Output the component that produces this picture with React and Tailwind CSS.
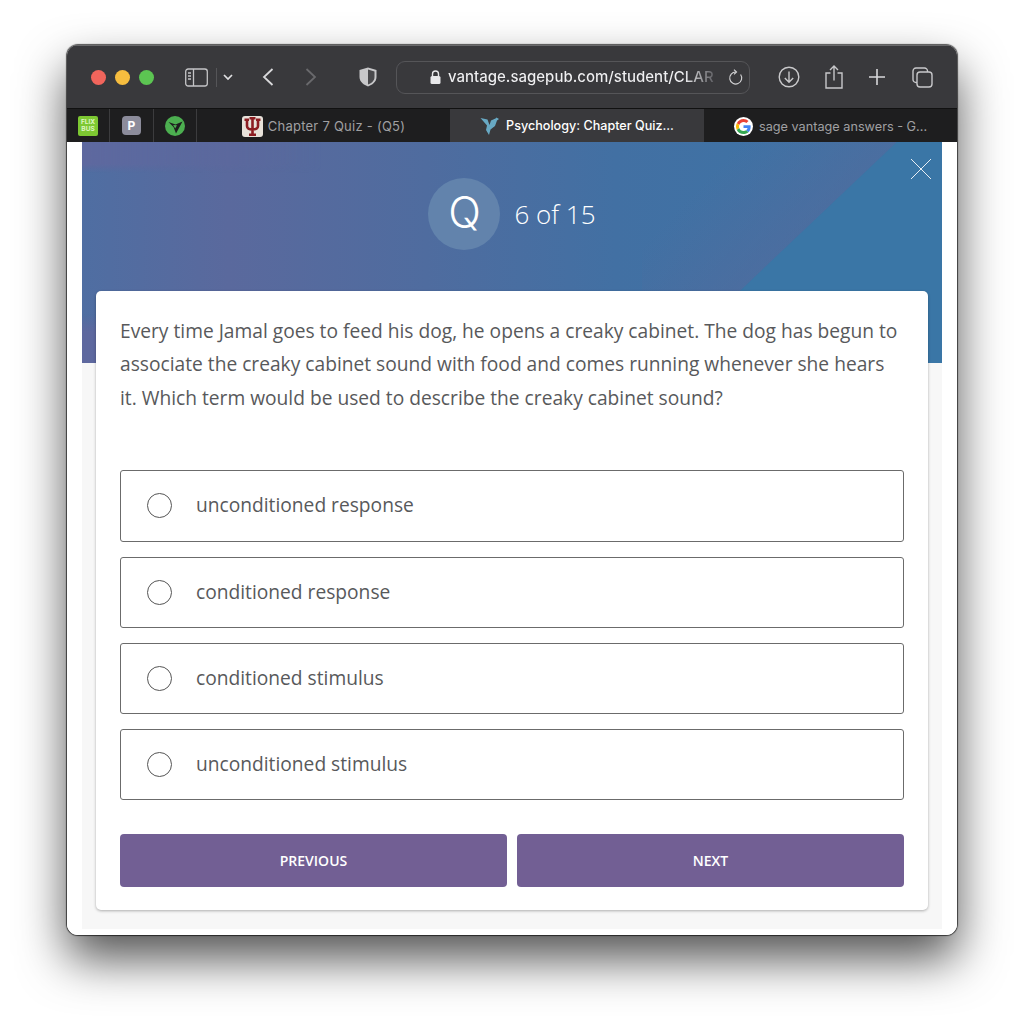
import React from "react";

function Tab({ icon, label, active, className = "", textClass = "" }) {
  return (
    <div className={`flex items-center justify-center gap-[5px] h-full ${active ? "bg-[#39393c] text-white font-medium" : "text-[#a0a0a2] border-l border-[#3c3c3e]"} ${className}`}>
      {icon}
      <span className={`whitespace-nowrap translate-y-[1px] ${textClass}`}>{label}</span>
    </div>
  );
}

function Option({ label }) {
  return (
    <div className="h-[71.3px] flex items-center rounded-[3px] border border-[#6b6b6b] bg-white pl-[26px]">
      <span className="w-[25px] h-[25px] rounded-full border border-[#555] mr-[24px] shrink-0" />
      <span className="text-[19.2px] text-[#58595b]">{label}</span>
    </div>
  );
}

function Header() {
  return (
    <div className="relative h-[221px] flex justify-center pt-[36px] overflow-hidden bg-[#4a6f9f]">
      <svg className="absolute inset-0" width="860" height="221" viewBox="0 0 860 221">
        <defs>
          <linearGradient id="g1" x1="0" y1="0" x2="860" y2="0" gradientUnits="userSpaceOnUse">
            <stop offset="0" stopColor="#4f6ea2" />
            <stop offset="0.17" stopColor="#5a699d" />
            <stop offset="0.4" stopColor="#4f6c9f" />
            <stop offset="0.62" stopColor="#4270a3" />
            <stop offset="1" stopColor="#3c74a6" />
          </linearGradient>
          <linearGradient id="g2" x1="0" y1="0" x2="0" y2="221" gradientUnits="userSpaceOnUse">
            <stop offset="0" stopColor="#61679e" />
            <stop offset="0.1" stopColor="#61679e" />
            <stop offset="0.14" stopColor="#61679e" stopOpacity="0" />
            <stop offset="0.78" stopColor="#61679e" stopOpacity="0" />
            <stop offset="0.86" stopColor="#61679e" />
          </linearGradient>
          <linearGradient id="g2x" x1="0" y1="0" x2="1" y2="0">
            <stop offset="0" stopColor="white" stopOpacity="0.85" />
            <stop offset="0.5" stopColor="white" stopOpacity="0.35" />
            <stop offset="1" stopColor="white" stopOpacity="0" />
          </linearGradient>
          <mask id="m1">
            <rect width="240" height="221" fill="url(#g2x)" />
          </mask>
          <linearGradient id="g3" x1="630" y1="30" x2="725" y2="120" gradientUnits="userSpaceOnUse">
            <stop offset="0" stopColor="#5a689a" stopOpacity="0" />
            <stop offset="1" stopColor="#5a689a" stopOpacity="0.55" />
          </linearGradient>
        </defs>
        <rect width="860" height="221" fill="url(#g1)" />
        <rect width="240" height="221" fill="url(#g2)" mask="url(#m1)" />
        <polygon points="560,0 815,0 582,221 560,221" fill="url(#g3)" />
        <polygon points="815,0 860,0 860,221 582,221" fill="#3a76a6" />
      </svg>
      <div className="relative flex items-center h-[72px]">
        <div className="w-[72px] h-[72px] rounded-full bg-[#6283ac] flex items-center justify-center">
          <span className="text-white text-[43px] leading-none font-light [font-family:Inter,sans-serif] -translate-y-[2px]">Q</span>
        </div>
        <span className="ml-[14px] text-white text-[26px] leading-none font-[350]">6 of 15</span>
      </div>
      <svg className="absolute top-[17px] right-[11px]" width="20" height="20" viewBox="0 0 20 20" fill="none" stroke="#e8eef4" strokeWidth="1">
        <path d="M0 0L20 20M20 0L0 20" />
      </svg>
    </div>
  );
}

export default function App() {
  return (
    <div className="w-[1024px] h-[1024px] bg-white pl-[67px] pt-[45px] overflow-hidden">
      <div className="w-[890px] h-[890px] rounded-[11px] overflow-hidden bg-white flex flex-col [box-shadow:0_24px_48px_rgba(0,0,0,0.68),0_0_1px_1px_rgba(0,0,0,0.65)] [font-family:Inter,sans-serif]">
        {/* toolbar */}
        <div className="h-[63px] shrink-0 bg-[#39393c] border-t border-[#6a6a6c] flex items-center text-[#c8c8ca] relative">
          <div className="flex items-center gap-[9px] ml-[24px]">
            <span className="w-[15px] h-[15px] rounded-full bg-[#f1655c]" />
            <span className="w-[15px] h-[15px] rounded-full bg-[#f6bd3f]" />
            <span className="w-[15px] h-[15px] rounded-full bg-[#5cc552]" />
          </div>
          <svg className="ml-[31px]" width="23" height="19" viewBox="0 0 23 19" fill="none" stroke="#c4c4c6" strokeWidth="1.3">
            <rect x="0.7" y="1" width="21.6" height="17" rx="2.5" />
            <path d="M8.5 1V18M3 5H6M3 8H6M3 11H6" />
          </svg>
          <span className="w-px h-[19px] bg-[#555558] ml-[8px]" />
          <svg className="ml-[6px]" width="10" height="7" viewBox="0 0 10 7" fill="none" stroke="#e0e0e2" strokeWidth="1.7">
            <path d="M1 1L5 5L9 1" />
          </svg>
          <svg className="ml-[29px]" width="12" height="18" viewBox="0 0 12 18" fill="none" stroke="#d8d8da" strokeWidth="1.8">
            <path d="M10.5 1L2 9L10.5 17" />
          </svg>
          <svg className="ml-[31px]" width="12" height="18" viewBox="0 0 12 18" fill="none" stroke="#69696c" strokeWidth="1.8">
            <path d="M1.5 1L10 9L1.5 17" />
          </svg>
          <svg className="ml-[42px]" width="18" height="20" viewBox="0 0 18 20">
            <path d="M9 0.5L17.5 3V10C17.5 15 13 18 9 19.5C5 18 0.5 15 0.5 10V3Z" fill="#c8c8ca" />
            <path d="M9 2.5L15.5 4.4V10C15.5 14 12 16.5 9 17.6Z" fill="#4a4a4d" />
          </svg>
          <div className="ml-[19px] w-[354px] h-[33px] rounded-[9px] border border-[#555558] flex items-center pl-[33px] relative">
            <svg width="11" height="14" viewBox="0 0 11 14" className="shrink-0 mr-[7px]">
              <path d="M2.5 6V4a3 3 0 0 1 6 0V6" fill="none" stroke="#e8e8ea" strokeWidth="1.4" />
              <rect x="0.5" y="6" width="10" height="8" rx="1.5" fill="#e8e8ea" />
            </svg>
            <span className="text-[15px] font-medium leading-[20px] whitespace-nowrap w-[268px] text-transparent bg-clip-text bg-[linear-gradient(90deg,#f0f0f2_88%,#55555a_100%)]">vantage.sagepub.com/student/CLAR</span>
            <svg className="absolute right-[6px]" width="15" height="17" viewBox="0 0 15 17" fill="none" stroke="#d0d0d2" strokeWidth="1.2">
              <path d="M8 3A6 6 0 1 0 12.6 5.5" />
              <path d="M6 0.6L8.5 3L6 5.4" />
            </svg>
          </div>
          <svg className="ml-[28px]" width="22" height="22" viewBox="0 0 22 22" fill="none" stroke="#c8c8ca" strokeWidth="1.4">
            <circle cx="11" cy="11" r="9.8" />
            <path d="M11 5.5V16M6.8 12L11 16.2L15.2 12" />
          </svg>
          <svg className="ml-[25px]" width="18" height="24" viewBox="0 0 18 24" fill="none" stroke="#c8c8ca" strokeWidth="1.4">
            <path d="M5.5 8H1V23H17V8H12.5M9 15.5V1.5M5 5L9 1L13 5" />
          </svg>
          <svg className="ml-[26px]" width="16" height="16" viewBox="0 0 16 16" fill="none" stroke="#d8d8da" strokeWidth="1.6">
            <path d="M8 0V16M0 8H16" />
          </svg>
          <svg className="ml-[27px]" width="21" height="21" viewBox="0 0 21 21" fill="none" stroke="#c8c8ca" strokeWidth="1.4">
            <rect x="5" y="5" width="15" height="15" rx="3" />
            <path d="M5 15.5H4a3 3 0 0 1-3-3V4a3 3 0 0 1 3-3h8.5a3 3 0 0 1 3 3v1" />
          </svg>
        </div>
        {/* tabs */}
        <div className="h-[34px] shrink-0 bg-[#1e1e1f] border-t border-[#111] flex items-stretch">
          <div className="w-[42px] flex items-center justify-center">
            <div className="w-[20px] h-[20px] rounded-[2px] bg-[#7dc832] text-[6.5px] leading-[7px] font-bold text-[#dff5c5] text-center flex items-center justify-center">FLIX<br />BUS</div>
          </div>
          <div className="w-[44px] flex items-center justify-center border-l border-[#3c3c3e]">
            <div className="w-[19px] h-[19px] rounded-[4px] bg-[#8c8c9b] text-white text-[12px] font-bold flex items-center justify-center">P</div>
          </div>
          <div className="w-[43px] flex items-center justify-center border-l border-[#3c3c3e]">
            <svg width="20" height="20" viewBox="0 0 20 20">
              <circle cx="10" cy="10" r="10" fill="#4caf50" />
              <polygon points="3.5,6 10.5,8.5 17.5,5.5 11,17.5 8.5,11" fill="#1e1e1f" />
              <polygon points="8.2,9 12,9.2 10.2,12.5" fill="#4caf50" />
            </svg>
          </div>
          <Tab
            className="w-[254px]"
            textClass="text-[13px] tracking-[0.25px]"
            label="Chapter 7 Quiz - (Q5)"
            icon={
              <span className="w-[21px] h-[21px] rounded-[3px] bg-[#e8e2da] flex items-center justify-center translate-y-[1px]">
                <svg width="17" height="19" viewBox="0 0 17 19" fill="none" stroke="#8c1d22" strokeWidth="2.6">
                  <path d="M5.5 1.3H11.5M8.5 1V17.5M5 17.7H12M3 3V9C3 11.5 5 12.5 8.5 12.5C12 12.5 14 11.5 14 9V3M0.5 2.8H5M12 2.8H16.5" />
                </svg>
              </span>
            }
          />
          <Tab
            active
            className="w-[254px]"
            textClass="text-[12.6px]"
            label="Psychology: Chapter Quiz..."
            icon={
              <svg width="20" height="20" viewBox="0 0 20 20" className="mr-[1px]">
                <path d="M0.5 2L7.5 3.5L9.5 9L11 4.5L15.5 2.5L16.5 1.5L19 3L17 4.5L15 10L10.5 13.5L9 19L6 14L7 9.5Z" fill="#68a9c4" />
              </svg>
            }
          />
          <div className="flex-1 flex items-center justify-center gap-[6px] text-[#a0a0a2]">
            <span className="w-[19px] h-[19px] rounded-full bg-white flex items-center justify-center translate-y-[1px]">
              <svg width="15" height="15" viewBox="0 0 48 48">
                <path fill="#EA4335" d="M24 9.5c3.5 0 6.7 1.2 9.2 3.6l6.9-6.9C35.9 2.4 30.5 0 24 0 14.6 0 6.5 5.4 2.6 13.2l8 6.2C12.4 13.7 17.7 9.5 24 9.5z" />
                <path fill="#4285F4" d="M46.9 24.5c0-1.6-.2-3.1-.4-4.5H24v9h12.9c-.6 3-2.2 5.5-4.8 7.2l7.7 6c4.5-4.2 7.1-10.3 7.1-17.7z" />
                <path fill="#FBBC05" d="M10.5 28.6c-.5-1.4-.8-3-.8-4.6s.3-3.2.8-4.6l-8-6.2C.9 16.5 0 20.1 0 24s.9 7.5 2.6 10.8l7.9-6.2z" />
                <path fill="#34A853" d="M24 48c6.5 0 11.9-2.1 15.9-5.8l-7.7-6c-2.2 1.4-4.9 2.3-8.2 2.3-6.3 0-11.6-4.2-13.5-9.9l-8 6.2C6.5 42.6 14.6 48 24 48z" />
              </svg>
            </span>
            <span className="text-[12.7px] whitespace-nowrap translate-y-[1px]">sage vantage answers - G...</span>
          </div>
        </div>
        {/* page */}
        <div className="flex-1 bg-white px-[15px] pb-[6px] flex">
          <div className="flex-1 bg-[#f7f7f7] [font-family:'Open_Sans',sans-serif]">
            <Header />
            <div className="relative mx-[14px] -mt-[72px] h-[619px] bg-white rounded-[5px] shadow-[0_1px_3px_rgba(0,0,0,0.3)] px-[24px] pt-[23px]">
              <p className="text-[19.2px] leading-[33.4px] text-[#58595b]">
                Every time Jamal goes to feed his dog, he opens a creaky cabinet. The dog has begun to associate the creaky cabinet sound with food and comes running whenever she hears it. Which term would be used to describe the creaky cabinet sound?
              </p>
              <div className="mt-[56px] flex flex-col gap-[15px]">
                <Option label="unconditioned response" />
                <Option label="conditioned response" />
                <Option label="conditioned stimulus" />
                <Option label="unconditioned stimulus" />
              </div>
              <div className="mt-[34px] flex gap-[10px]">
                <button className="flex-1 h-[53px] rounded-[4px] bg-[#725f94] text-white text-[14px] font-semibold">PREVIOUS</button>
                <button className="flex-1 h-[53px] rounded-[4px] bg-[#725f94] text-white text-[14px] font-semibold">NEXT</button>
              </div>
            </div>
          </div>
        </div>
      </div>
    </div>
  );
}
